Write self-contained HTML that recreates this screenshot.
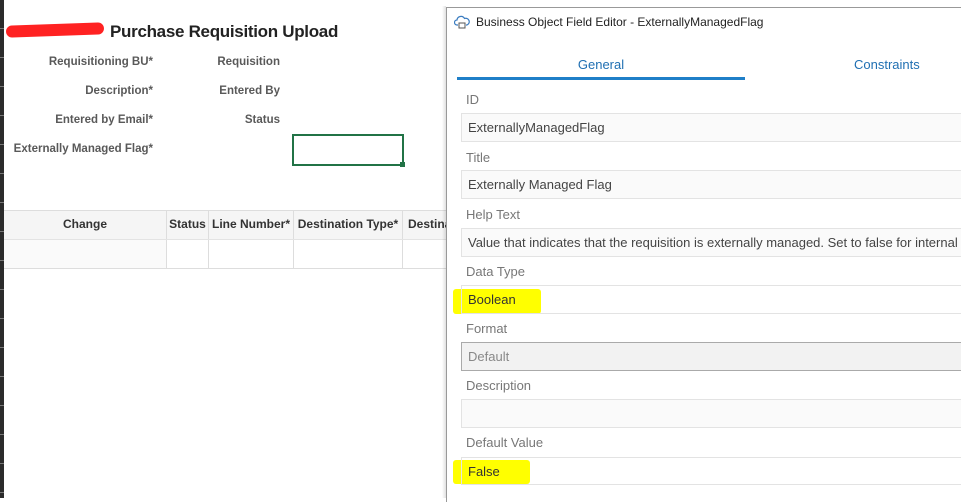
<!DOCTYPE html>
<html><head><style>
*{margin:0;padding:0;box-sizing:border-box}
body{width:961px;height:498px;overflow:hidden;background:#fff;font-family:"Liberation Sans",sans-serif;position:relative}
.a{position:absolute}
.lbl{position:absolute;font-size:11.5px;font-weight:bold;color:#595959;text-align:right;white-space:nowrap}
.th{position:absolute;top:210px;height:30px;line-height:29px;font-size:12px;font-weight:bold;color:#333;text-align:center;border-right:1px solid #ddd;background:#f5f5f5;white-space:nowrap;overflow:hidden}
.td{position:absolute;top:240px;height:28px;border-right:1px solid #ddd;background:#fafafa}
.fl{position:absolute;left:466px;font-size:13px;color:#777}
.in{position:absolute;left:461px;width:520px;height:29px;border:1px solid #e3e3e3;background:#fafafa;font-size:13px;color:#444;padding-left:6px;line-height:27px}
.hl{position:absolute;background:#ffff00}
</style></head><body>
<div class="a" style="left:0;top:0;width:4px;height:498px;background:repeating-linear-gradient(180deg,#2b2b2b 0 28px,#777 28px 29px)"></div>
<div class="a" style="left:6px;top:24px;width:98px;height:12px;background:#f22;border-radius:6px;transform:rotate(-2deg)"></div>
<div class="a" style="left:110px;top:22px;font-size:17px;font-weight:bold;color:#222;letter-spacing:-0.3px">Purchase Requisition Upload</div>
<div class="lbl" style="right:808px;top:56px">Requisitioning BU*</div>
<div class="lbl" style="right:808px;top:85px">Description*</div>
<div class="lbl" style="right:808px;top:114px">Entered by Email*</div>
<div class="lbl" style="right:808px;top:143px">Externally Managed Flag*</div>
<div class="lbl" style="right:681px;top:56px">Requisition</div>
<div class="lbl" style="right:681px;top:85px">Entered By</div>
<div class="lbl" style="right:681px;top:114px">Status</div>
<div class="a" style="left:292px;top:134px;width:112px;height:32px;border:2px solid #217346"></div>
<div class="a" style="left:400px;top:162px;width:5px;height:5px;background:#217346"></div>
<div class="th" style="left:4px;width:163px">Change</div>
<div class="th" style="left:167px;width:42px">Status</div>
<div class="th" style="left:209px;width:85px">Line Number*</div>
<div class="th" style="left:294px;width:109px">Destination Type*</div>
<div class="th" style="left:403px;width:50px;text-align:left;padding-left:5px">Destina</div>
<div class="a" style="left:4px;top:210px;width:446px;height:1px;background:#ddd"></div>
<div class="td" style="left:4px;width:163px"></div>
<div class="td" style="left:167px;width:42px;background:#fff"></div>
<div class="td" style="left:209px;width:85px;background:#fff"></div>
<div class="td" style="left:294px;width:109px;background:#fff"></div>
<div class="a" style="left:4px;top:239px;width:446px;height:1px;background:#e3e3e3"></div>
<div class="a" style="left:4px;top:268px;width:446px;height:1px;background:#ddd"></div>
<div class="a" style="left:442px;top:6px;width:4px;height:492px;background:linear-gradient(90deg,rgba(0,0,0,0),rgba(0,0,0,.12))"></div>
<div class="a" style="left:446px;top:7px;width:520px;height:495px;background:#fff;border:1px solid #999;border-right:none;border-bottom:none"></div>
<svg class="a" style="left:454px;top:15px" width="16" height="14" viewBox="0 0 16 14"><path d="M4 10H3a2.5 2.5 0 0 1 0-5 4 4 0 0 1 7.5-1.5A3 3 0 0 1 13 10h-1" fill="none" stroke="#3a7cc0" stroke-width="1.2"/><rect x="5" y="8" width="6" height="5" fill="none" stroke="#555" stroke-width="1"/></svg>
<div class="a" style="left:476px;top:15px;font-size:12px;color:#222">Business Object Field Editor - ExternallyManagedFlag</div>
<div class="a" style="left:457px;top:57px;width:288px;text-align:center;font-size:13px;color:#1f6fb2">General</div>
<div class="a" style="left:457px;top:77px;width:288px;height:3px;background:#1f7fc8"></div>
<div class="a" style="left:854px;top:57px;width:110px;font-size:13px;color:#1f6fb2">Constraints</div>
<div class="hl" style="left:453px;top:289px;width:88px;height:25px;border-radius:3px"></div>
<div class="hl" style="left:453px;top:460px;width:77px;height:24px;border-radius:3px"></div>
<div class="fl" style="top:92px">ID</div>
<div class="in" style="top:113px">ExternallyManagedFlag</div>
<div class="fl" style="top:150px">Title</div>
<div class="in" style="top:170px">Externally Managed Flag</div>
<div class="fl" style="top:207px">Help Text</div>
<div class="in" style="top:228px;white-space:nowrap;overflow:hidden">Value that indicates that the requisition is externally managed. Set to false for internal</div>
<div class="fl" style="top:264px">Data Type</div>
<div class="in" style="top:285px;background:transparent;color:#333">Boolean</div>
<div class="fl" style="top:321px">Format</div>
<div class="in" style="top:342px;background:#f2f2f2;border-color:#aaa;color:#888">Default</div>
<div class="fl" style="top:378px">Description</div>
<div class="in" style="top:399px"></div>
<div class="fl" style="top:435px">Default Value</div>
<div class="in" style="top:457px;background:transparent;color:#333;height:28px">False</div>
</body></html>
